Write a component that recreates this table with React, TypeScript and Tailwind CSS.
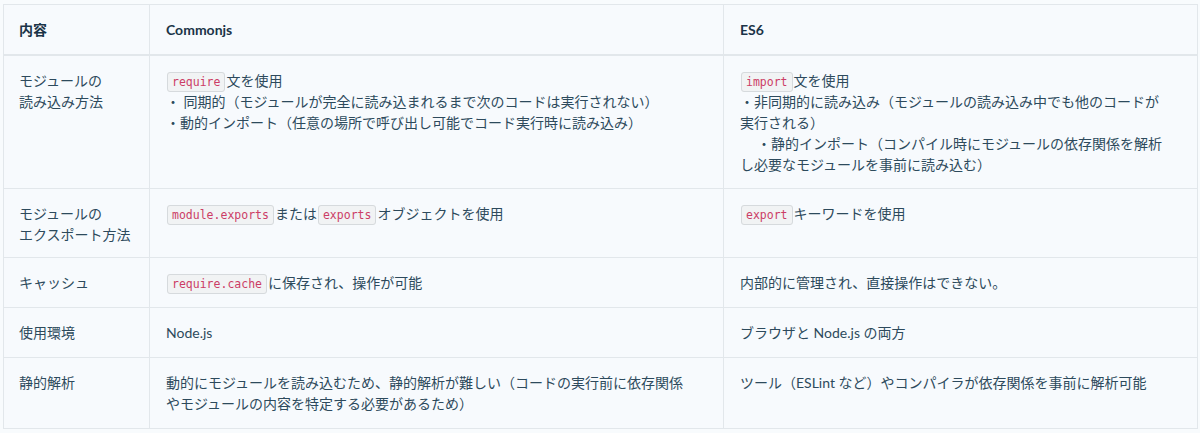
import React from 'react';

const Code: React.FC<{ children: React.ReactNode }> = ({ children }) => (
  <code className="inline leading-[15px] py-[2px] px-[4px] mx-[1px] rounded-[3px] border border-[#d6dadd] bg-[#f1f3f4] text-[#cc3d66] text-[11.5px] font-['DejaVu_Sans_Mono',monospace]">
    {children}
  </code>
);

const Line: React.FC<{ children: React.ReactNode }> = ({ children }) => (
  <div className="h-[21px] whitespace-nowrap">{children}</div>
);

const rows: { label: React.ReactNode; cjs: React.ReactNode; es6: React.ReactNode; pb: string }[] = [
  {
    pb: 'pb-[13px]',
    label: (
      <>
        <Line>モジュールの</Line>
        <Line>読み込み方法</Line>
      </>
    ),
    cjs: (
      <>
        <Line>
          <Code>require</Code>文を使用
        </Line>
        <Line>・ 同期的（モジュールが完全に読み込まれるまで次のコードは実行されない）</Line>
        <Line>・動的インポート（任意の場所で呼び出し可能でコード実行時に読み込み）</Line>
      </>
    ),
    es6: (
      <>
        <Line>
          <Code>import</Code>文を使用
        </Line>
        <Line>・非同期的に読み込み（モジュールの読み込み中でも他のコードが</Line>
        <Line>実行される）</Line>
        <Line>
          <span className="inline-block w-[17px]"></span>・静的インポート（コンパイル時にモジュールの依存関係を解析
        </Line>
        <Line>し必要なモジュールを事前に読み込む）</Line>
      </>
    ),
  },
  {
    pb: 'pb-[12px]',
    label: (
      <>
        <Line>モジュールの</Line>
        <Line>エクスポート方法</Line>
      </>
    ),
    cjs: (
      <Line>
        <Code>module.exports</Code>または<Code>exports</Code>オブジェクトを使用
      </Line>
    ),
    es6: (
      <Line>
        <Code>export</Code>キーワードを使用
      </Line>
    ),
  },
  {
    pb: 'pb-[14px]',
    label: <Line>キャッシュ</Line>,
    cjs: (
      <Line>
        <Code>require.cache</Code>に保存され、操作が可能
      </Line>
    ),
    es6: <Line>内部的に管理され、直接操作はできない。</Line>,
  },
  {
    pb: 'pb-[14px]',
    label: <Line>使用環境</Line>,
    cjs: <Line>Node.js</Line>,
    es6: <Line>ブラウザと Node.js の両方</Line>,
  },
  {
    pb: 'pb-[14px]',
    label: <Line>静的解析</Line>,
    cjs: (
      <>
        <Line>動的にモジュールを読み込むため、静的解析が難しい（コードの実行前に依存関係</Line>
        <Line>やモジュールの内容を特定する必要があるため）</Line>
      </>
    ),
    es6: <Line>ツール（ESLint など）やコンパイラが依存関係を事前に解析可能</Line>,
  },
];

export default function App() {
  const cell = 'align-top pt-[14px] border border-[#e2e7eb]';
  return (
    <div className="w-[1200px] h-[433px] bg-[#f8fbfd] pt-[4px] pl-[3px] font-['Lato','Noto_Sans_CJK_JP',sans-serif] text-[14px] leading-[21px] text-[#2d4a5c]">
      <table className="w-[1194px] border-collapse table-fixed bg-[#f7fafd]">
        <colgroup>
          <col className="w-[146px]" />
          <col className="w-[574px]" />
          <col className="w-[474px]" />
        </colgroup>
        <thead>
          <tr className="border-b-2 border-[#e2e7eb]">
            <th className={`${cell} pb-[14px] text-left font-bold pl-[15px] text-[#1b3448]`}>内容</th>
            <th className={`${cell} pb-[14px] text-left font-bold px-4 text-[#1b3448]`}>Commonjs</th>
            <th className={`${cell} pb-[14px] text-left font-bold px-4 text-[#1b3448]`}>ES6</th>
          </tr>
        </thead>
        <tbody>
          {rows.map((r, i) => (
            <tr key={i}>
              <td className={`${cell} ${r.pb} pl-[15px] pr-2`}>{r.label}</td>
              <td className={`${cell} ${r.pb} px-4`}>{r.cjs}</td>
              <td className={`${cell} ${r.pb} px-4`}>{r.es6}</td>
            </tr>
          ))}
        </tbody>
      </table>
    </div>
  );
}
